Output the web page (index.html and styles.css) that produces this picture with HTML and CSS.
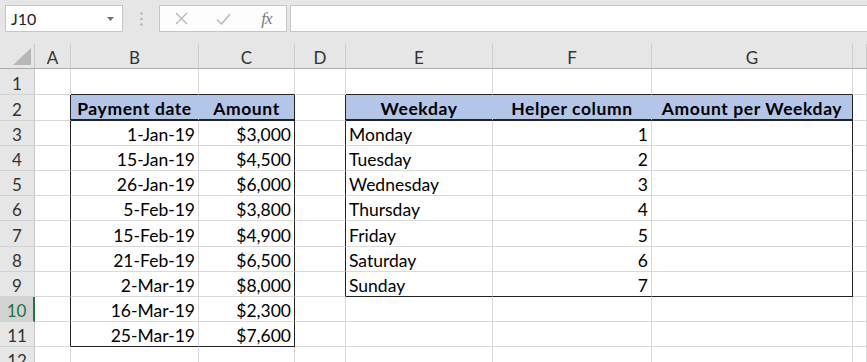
FILE: index.html
```html
<html>

    <head>
        <title>Weekday totals</title>
        <link rel="stylesheet" href="styles.css">
    </head>

    <body>
        <div class="formula-bar">
            <div class="name-box">
                <span>J10</span>
                <svg width="7" height="4" viewBox="0 0 7 4"><path d="M0 0h7L3.5 4z" fill="#6f6f6f"/></svg>
            </div>
            <div class="grip">
                <svg width="3" height="14" viewBox="0 0 3 14"><circle cx="1.5" cy="1.5" r="1.2"/><circle cx="1.5" cy="7" r="1.2"/><circle cx="1.5" cy="12.5" r="1.2"/></svg>
            </div>
            <div class="fx-box">
                <svg width="13" height="13" viewBox="0 0 13 13"><path d="M1 1l11 11M12 1L1 12" stroke="#b8b8b8" stroke-width="1.4" fill="none"/></svg>
                <svg width="15" height="12" viewBox="0 0 15 12"><path d="M1 6.5l4.5 4.5L14 1" stroke="#b8b8b8" stroke-width="1.5" fill="none"/></svg>
                <span class="fx">fx</span>
            </div>
            <div class="formula-input"></div>
        </div>

        <div class="sheet" id="sheet"></div>

        <script>
            var letters = ['', 'A', 'B', 'C', 'D', 'E', 'F', 'G', ''];

            // bordered ranges on the sheet (column numbers: A = 1)
            var tables = [
                {top: 2, bottom: 11, left: 2, right: 3},
                {top: 2, bottom: 9, left: 5, right: 7}
            ];

            var data = {
                2: {2: 'Payment date', 3: 'Amount', 5: 'Weekday', 6: 'Helper column', 7: 'Amount per Weekday'},
                3: {2: '1-Jan-19', 3: '$3,000', 5: 'Monday', 6: '1'},
                4: {2: '15-Jan-19', 3: '$4,500', 5: 'Tuesday', 6: '2'},
                5: {2: '26-Jan-19', 3: '$6,000', 5: 'Wednesday', 6: '3'},
                6: {2: '5-Feb-19', 3: '$3,800', 5: 'Thursday', 6: '4'},
                7: {2: '15-Feb-19', 3: '$4,900', 5: 'Friday', 6: '5'},
                8: {2: '21-Feb-19', 3: '$6,500', 5: 'Saturday', 6: '6'},
                9: {2: '2-Mar-19', 3: '$8,000', 5: 'Sunday', 6: '7'},
                10: {2: '16-Mar-19', 3: '$2,300'},
                11: {2: '25-Mar-19', 3: '$7,600'}
            };

            var activeRow = 10;

            function cellClasses(r, c){
                let cls = ['cell'];
                for (let t of tables) {
                    let inRows = r >= t.top && r <= t.bottom;
                    let inCols = c >= t.left && c <= t.right;
                    if (inRows && c == t.left - 1) cls.push('edge-r');
                    if (inCols && r == t.top - 1) cls.push('edge-b');
                    if (inRows && inCols) {
                        if (c == t.right) cls.push('edge-r');
                        if (r == t.bottom) cls.push('edge-b');
                        if (r == t.top) {
                            cls.push('head');
                            if (c != t.right) cls.push('fill-r');
                        }
                    }
                }
                return cls;
            }

            function build(){
                let sheet = document.getElementById('sheet');
                let html = '<div class="corner"></div>';

                for (let c = 1; c < letters.length; c++) {
                    html += `<div class="col-head">${letters[c]}</div>`;
                }

                for (let r = 1; r <= 12; r++) {
                    let active = r == activeRow ? ' active' : '';
                    html += `<div class="row-head${active}">${r}</div>`;
                    for (let c = 1; c < letters.length; c++) {
                        let cls = cellClasses(r, c);
                        let value = (data[r] && data[r][c]) || '';
                        if (value && r > 2) {
                            cls.push(/^[0-9$]/.test(value) ? 'num' : 'txt');
                        }
                        html += `<div class="${cls.join(' ')}">${value}</div>`;
                    }
                }

                sheet.innerHTML = html;
            }

            build();
        </script>
    </body>

</html>
```

FILE: styles.css
```css
body {
    margin: 0;
    background-color: #e6e6e6;
    font-family: Lato, "Liberation Sans", sans-serif;
    overflow: hidden;
}

/* name box + formula input */

.formula-bar {
    display: flex;
    align-items: flex-start;
    height: 44px;
    padding: 5px 0 0 5px;
    box-sizing: border-box;
}

.name-box {
    display: flex;
    align-items: center;
    justify-content: space-between;
    width: 118px;
    height: 27px;
    padding: 0 8px 0 5px;
    box-sizing: border-box;
    border: 1px solid #c6c6c6;
    background-color: white;
    font-size: 16px;
    color: #222;
}

.grip {
    display: flex;
    justify-content: center;
    width: 36px;
    padding-top: 7px;
    fill: #b3b3b3;
}

.fx-box {
    display: grid;
    grid-template-columns: 42px 43px 43px;
    justify-items: center;
    align-items: center;
    width: 128px;
    height: 27px;
    box-sizing: border-box;
    border: 1px solid #c6c6c6;
    background-color: #fdfdfd;
}

.fx-box .fx {
    font-family: "Liberation Serif", serif;
    font-style: italic;
    font-size: 17px;
    color: #7a7a7a;
    letter-spacing: -1px;
}

.formula-input {
    flex: 1;
    height: 27px;
    margin-left: 3px;
    box-sizing: border-box;
    border: 1px solid #c6c6c6;
    border-right: 0;
    background-color: white;
}

/* grid */

.sheet {
    display: grid;
    grid-template-columns: 35px 36px 128px 96px 51px 147px 159px 201px 1fr;
    grid-template-rows: 25px 26px 26px repeat(4, 25px) 26px repeat(5, 25px);
    background-color: white;
    font-size: 17.5px;
}

.sheet > div {
    box-sizing: border-box;
    display: flex;
    align-items: flex-end;
    line-height: 21px;
    padding: 0 3px 0;
    white-space: nowrap;
    overflow: hidden;
}

.corner {
    position: relative;
    background-color: #e6e6e6;
    border-right: 1px solid #c9c9c9;
    border-bottom: 1px solid #ababab;
}

.corner::after {
    content: "";
    position: absolute;
    right: 3px;
    bottom: 3px;
    width: 18px;
    height: 17px;
    background-color: #b7b7b7;
    clip-path: polygon(100% 0, 100% 100%, 0 100%);
}

.col-head {
    justify-content: center;
    background-color: #e6e6e6;
    border-right: 1px solid #cdcdcd;
    border-bottom: 1px solid #ababab;
    font-size: 17px;
    color: #333;
}

.row-head {
    justify-content: center;
    background-color: #e6e6e6;
    border-right: 1px solid #c9c9c9;
    border-bottom: 1px solid #d2d2d2;
    font-size: 17px;
    color: #333;
}

.row-head.active {
    background-color: #d2d2d2;
    border-right: 2px solid #217346;
    color: #217346;
}

.cell {
    border-right: 1px solid #d9d9d9;
    border-bottom: 1px solid #d9d9d9;
    color: black;
}

.cell.num {
    justify-content: flex-end;
}

.cell.head {
    justify-content: center;
    background-color: #b4c6e7;
    border-bottom: 2px solid #222;
    font-weight: bold;
    letter-spacing: 0.6px;
}

.cell.fill-r {
    border-right-color: #b4c6e7;
}

.cell.edge-r {
    border-right-color: #222;
}

.cell.edge-b {
    border-bottom-color: #222;
}
```
